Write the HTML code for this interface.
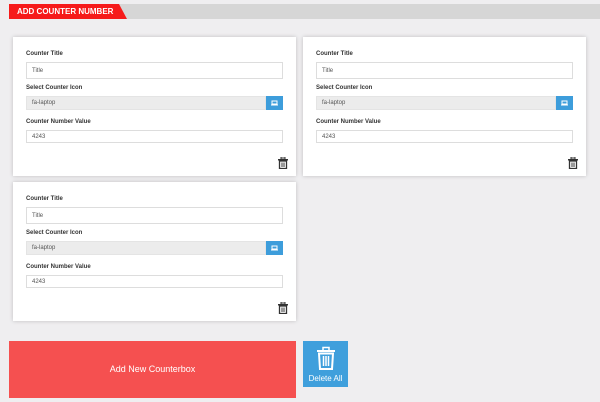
<!DOCTYPE html><html><head><style>
body{margin:0;width:600px;height:402px;background:#efeef0;font-family:"Liberation Sans",sans-serif;position:relative;overflow:hidden}
.a{position:absolute}
.bar{left:9px;top:4px;width:591px;height:15px;background:#d6d6d6}
.tab{left:9px;top:4px;width:118px;height:15px;background:#f61a1a;clip-path:polygon(0 0,110px 0,118px 15px,0 15px);color:#fff;font-size:8px;font-weight:bold;line-height:15px;padding-left:8px;box-sizing:border-box}
.card{width:283px;height:139px;background:#fff;box-shadow:0 0 4px rgba(0,0,0,.2)}
.lb{position:absolute;left:13px;font-size:6px;font-weight:bold;color:#333}
.in{position:absolute;left:13px;width:257px;box-sizing:border-box;border:1px solid #ddd;background:#fff;font-size:6px;color:#555;padding-left:5px;display:flex;align-items:center}
.ic{background:#ececec;border-color:#e4e4e4;width:240px}
.btn{position:absolute;left:253px;top:59px;width:17px;height:14px;background:#3d9ddb}
.trash{position:absolute;left:265px;top:120px}
</style></head><body>
<div class="a bar"></div><div class="a tab">ADD COUNTER NUMBER</div>

<div class="a card" style="left:13px;top:37px">
<div class="lb" style="top:14px">Counter Title</div>
<div class="in" style="top:25px;height:17px">Title</div>
<div class="lb" style="top:48px">Select Counter Icon</div>
<div class="in ic" style="top:59px;height:14px">fa-laptop</div>
<div class="btn"><svg width="17" height="14"><rect x="6" y="5" width="5" height="3" fill="none" stroke="#fff" stroke-width="1"/><rect x="5" y="8.5" width="7" height="1" fill="#fff"/></svg></div>
<div class="lb" style="top:82px">Counter Number Value</div>
<div class="in" style="top:93px;height:13px">4243</div>
<svg class="trash" width="10" height="12"><rect x="0" y="2" width="10" height="1.5" fill="#333"/><rect x="3" y="0" width="4" height="2" fill="none" stroke="#333" stroke-width="1"/><rect x="1.5" y="4" width="7" height="7.5" fill="none" stroke="#333" stroke-width="1.3"/><path d="M4 5.5v4.5M6 5.5v4.5" stroke="#333"/></svg>
</div>

<div class="a card" style="left:303px;top:37px">
<div class="lb" style="top:14px">Counter Title</div>
<div class="in" style="top:25px;height:17px">Title</div>
<div class="lb" style="top:48px">Select Counter Icon</div>
<div class="in ic" style="top:59px;height:14px">fa-laptop</div>
<div class="btn"><svg width="17" height="14"><rect x="6" y="5" width="5" height="3" fill="none" stroke="#fff" stroke-width="1"/><rect x="5" y="8.5" width="7" height="1" fill="#fff"/></svg></div>
<div class="lb" style="top:82px">Counter Number Value</div>
<div class="in" style="top:93px;height:13px">4243</div>
<svg class="trash" width="10" height="12"><rect x="0" y="2" width="10" height="1.5" fill="#333"/><rect x="3" y="0" width="4" height="2" fill="none" stroke="#333" stroke-width="1"/><rect x="1.5" y="4" width="7" height="7.5" fill="none" stroke="#333" stroke-width="1.3"/><path d="M4 5.5v4.5M6 5.5v4.5" stroke="#333"/></svg>
</div>

<div class="a card" style="left:13px;top:182px">
<div class="lb" style="top:14px">Counter Title</div>
<div class="in" style="top:25px;height:17px">Title</div>
<div class="lb" style="top:48px">Select Counter Icon</div>
<div class="in ic" style="top:59px;height:14px">fa-laptop</div>
<div class="btn"><svg width="17" height="14"><rect x="6" y="5" width="5" height="3" fill="none" stroke="#fff" stroke-width="1"/><rect x="5" y="8.5" width="7" height="1" fill="#fff"/></svg></div>
<div class="lb" style="top:82px">Counter Number Value</div>
<div class="in" style="top:93px;height:13px">4243</div>
<svg class="trash" width="10" height="12"><rect x="0" y="2" width="10" height="1.5" fill="#333"/><rect x="3" y="0" width="4" height="2" fill="none" stroke="#333" stroke-width="1"/><rect x="1.5" y="4" width="7" height="7.5" fill="none" stroke="#333" stroke-width="1.3"/><path d="M4 5.5v4.5M6 5.5v4.5" stroke="#333"/></svg>
</div>

<div class="a" style="left:9px;top:341px;width:287px;height:57px;background:#f55050;color:#fff;font-size:9px;text-align:center;line-height:57px">Add New Counterbox</div>
<div class="a" style="left:303px;top:341px;width:45px;height:46px;background:#3f9fdc;color:#fff;font-size:8px;text-align:center">
<svg width="20" height="25" style="display:block;margin:5px auto 0"><rect x="1" y="4" width="18" height="2" fill="#fff"/><path d="M7 4V1.5h6V4" fill="none" stroke="#fff" stroke-width="1.5"/><path d="M3 7.5h14l-1 15.5H4z" fill="none" stroke="#fff" stroke-width="2"/><path d="M7.5 10v10M10 10v10M12.5 10v10" stroke="#fff" stroke-width="1.5"/></svg>
<div style="margin-top:3px">Delete All</div></div>
</body></html>
